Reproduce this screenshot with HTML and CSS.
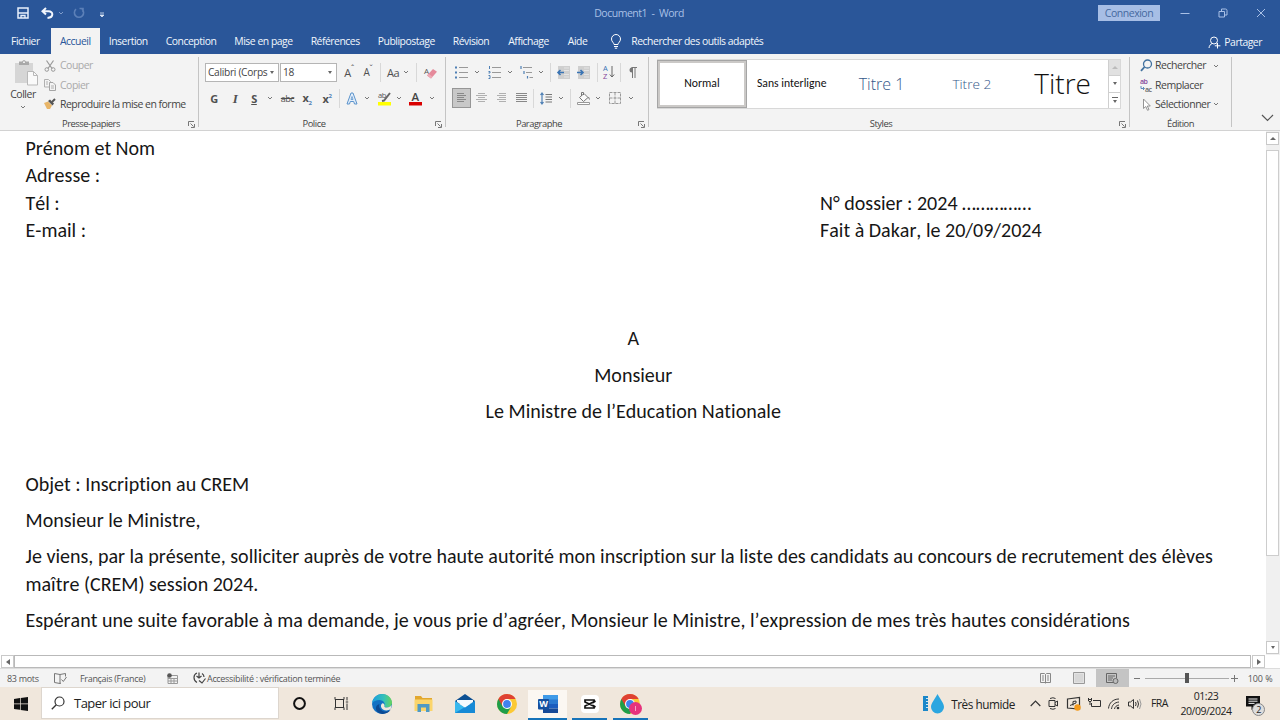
FILE: index.html
```
<!DOCTYPE html>
<html lang="fr">
<head>
  <meta charset="UTF-8">
  <meta name="viewport" content="width=device-width, initial-scale=1.0">
  <title>Document1 - Word</title>
  <link rel="stylesheet" href="styles.css">
</head>
<body>
  <svg class="defs" width="0" height="0">
    <symbol id="chev" viewBox="0 0 6 6"><path d="M1 2l2 2 2-2" fill="none" stroke="currentColor"/></symbol>
    <symbol id="launcher" viewBox="0 0 7 7"><path d="M.5 5V.5H6M2.500 2.500l3 3M6.500 3v3.500H3" fill="none" stroke="#777"/></symbol>
    <symbol id="chrome" viewBox="0 0 20 20">
      <circle cx="10" cy="10" r="10" fill="#fcc934"/>
      <path d="M10 10L1.340 5A10 10 0 0 0 10 20l4.300-7.500z" fill="#1e9e4a"/>
      <path d="M1.340 5A10 10 0 0 1 18.660 5H10L5.700 12.500z" fill="#df4132"/>
      <circle cx="10" cy="10" r="5" fill="#fff"/>
      <circle cx="10" cy="10" r="3.900" fill="#3f82ee"/>
    </symbol>
  </svg>

  <!-- Title bar -->
  <header class="titlebar">
    <div class="quick">
      <svg width="12" height="12" viewBox="0 0 12 12"><path d="M1 1h10v10H1z" fill="none" stroke="#e8f0fb" stroke-width="1.500"/><path d="M1 6h10M4 11V8.500h4V11" fill="none" stroke="#e8f0fb" stroke-width="1.300"/></svg>
      <svg width="13" height="12" viewBox="0 0 13 12"><path d="M5 1L1.500 4.300 5 7.600M2 4.300h5.500c5 0 5.500 6-1 6.700" fill="none" stroke="#f2f6fd" stroke-width="2"/></svg>
      <svg class="dim" width="6" height="6"><use href="#chev"/></svg>
      <svg class="dim" width="12" height="12" viewBox="0 0 12 12"><path d="M3 2.200A4.600 4.600 0 1 0 9 2.200M6.500 1.500H10V5" fill="none" stroke="#5c80b8" stroke-width="1.600"/></svg>
      <svg width="6" height="6" viewBox="0 0 6 6"><path d="M1 1h4M1 3h4L3 5z" fill="#dce6f5" stroke="#dce6f5" stroke-width=".8"/></svg>
    </div>
    <div class="doc-title">Document1 &nbsp;- &nbsp;Word</div>
    <div class="window-buttons">
      <button class="signin">Connexion</button>
      <svg width="10" height="10" viewBox="0 0 10 10"><path d="M.5 5.500h9" stroke="#a9c0e6"/></svg>
      <svg width="10" height="10" viewBox="0 0 10 10"><path d="M1 3.500h5.500v5.500H1zM3.500 3V1h4q1.500 0 1.500 1.500V7H7" fill="none" stroke="#a9c0e6"/></svg>
      <svg width="10" height="10" viewBox="0 0 10 10"><path d="M1 1l8 8M9 1L1 9" stroke="#a9c0e6"/></svg>
    </div>
  </header>

  <nav class="tabs">
    <a class="tab">Fichier</a>
    <a class="tab active">Accueil</a>
    <a class="tab">Insertion</a>
    <a class="tab">Conception</a>
    <a class="tab">Mise en page</a>
    <a class="tab">Références</a>
    <a class="tab">Publipostage</a>
    <a class="tab">Révision</a>
    <a class="tab">Affichage</a>
    <a class="tab">Aide</a>
    <a class="tell-me">
      <svg width="12" height="15" viewBox="0 0 12 15"><path d="M4 10.500C4 8.500 1.500 8 1.500 5a4.500 4.500 0 0 1 9 0c0 3-2.500 3.500-2.500 5.500zM4 12.500h4M4.800 14.200h2.400" fill="none" stroke="#fff"/></svg>
      Rechercher des outils adaptés
    </a>
    <a class="share">
      <svg width="13" height="13" viewBox="0 0 13 13"><circle cx="6" cy="4.500" r="3.500" fill="none" stroke="#fff"/><path d="M1 12c.3-2.500 1.500-3.800 3.300-4.500M7.500 7.500l1 .6M9.500 7v5.500M6.800 9.800h5.600" fill="none" stroke="#fff"/></svg>
      Partager
    </a>
  </nav>

  <!-- Ribbon -->
  <section class="ribbon">
    <div class="group clipboard">
      <div class="group-body">
        <div class="paste">
          <svg width="25" height="28" viewBox="0 0 25 28"><path d="M1 4h18v20H1z" fill="#d6d6d6"/><path d="M5 2.500h3Q10-.5 12 2.500h3V6H5z" fill="#a9a9a9"/><path d="M9 2.500h2v1.500H9z" fill="#eee"/><path d="M13.500 12.500h6l4 4v9.500h-10z" fill="#fafafa" stroke="#b9b9b9"/><path d="M19.500 12.500v4h4" fill="none" stroke="#b9b9b9"/></svg>
          <span>Coller</span>
          <svg width="6" height="6"><use href="#chev"/></svg>
        </div>
        <div class="commands">
          <div class="command disabled"><svg width="12" height="12" viewBox="0 0 12 12"><path d="M2.500.5l5.500 8M9.500.5L4 8.500" stroke="#999" stroke-width="1.200"/><circle cx="2.800" cy="9.500" r="1.800" fill="none" stroke="#999"/><circle cx="9.200" cy="9.500" r="1.800" fill="none" stroke="#999"/></svg>Couper</div>
          <div class="command disabled"><svg width="12" height="12" viewBox="0 0 12 12"><path d="M.5.500h4l2 2V8h-6z" fill="#f3f3f3" stroke="#b0b0b0"/><path d="M5.500 3.500H9l2.500 2.500v5.500h-6z" fill="#f3f3f3" stroke="#a5a5a5"/><path d="M7 7h3M7 9h3M2 3h2M2 5h2" stroke="#b0b0b0"/></svg>Copier</div>
          <div class="command"><svg width="12" height="12" viewBox="0 0 12 12"><path d="M0 5l4-1.500 4 4L6 11H3z" fill="#e8b568"/><path d="M4 3l2-1.500 4 4L8.500 7.500z" fill="#555"/><path d="M8 4l3-3" stroke="#555" stroke-width="2"/></svg>Reproduire la mise en forme</div>
        </div>
      </div>
      <div class="group-label"><span>Presse-papiers</span><svg width="7" height="7"><use href="#launcher"/></svg></div>
    </div>

    <div class="group font">
      <div class="group-body rows">
        <div class="row font-row1">
          <div class="combo">Calibri (Corps<i class="arrow"></i></div>
          <div class="combo">18<i class="arrow"></i></div>
          <span class="glyph">A<sup>ˆ</sup></span>
          <span class="glyph small">A<sup>ˇ</sup></span>
          <i class="sep"></i>
          <span class="glyph">Aa</span>
          <svg width="6" height="6"><use href="#chev"/></svg>
          <i class="sep"></i>
          <svg width="13" height="13" viewBox="0 0 13 13"><text class="svg-a" x="0" y="7.500">A</text><path d="M3 9.500L9 3l4 2.800L7 12.500z" fill="#e58a9b"/><path d="M3 9.500l1.600-1.700 4 3L7 12.500z" fill="#eda9b5"/></svg>
        </div>
        <div class="row font-row2">
          <b class="glyph">G</b>
          <b class="glyph italic">I</b>
          <b class="glyph underline">S</b>
          <svg width="6" height="6"><use href="#chev"/></svg>
          <span class="glyph strike">abc</span>
          <b class="glyph">x<sub>2</sub></b>
          <b class="glyph">x<sup class="two">2</sup></b>
          <i class="sep"></i>
          <svg width="12" height="13" viewBox="0 0 12 13"><path d="M1 12L5 1h2l4 11H8.500L7.700 9.500H4.300L3.500 12z" fill="#e3eefa" stroke="#5b93cc"/><path d="M5 7.500h2L6 4.500z" fill="#fff" stroke="#5b93cc" stroke-width=".8"/></svg>
          <svg width="6" height="6"><use href="#chev"/></svg>
          <svg width="15" height="15" viewBox="0 0 15 15"><text class="svg-ab" x="1" y="7">ab</text><path d="M13 2L7 9.500 5 10" fill="none" stroke="#666" stroke-width="2"/><path d="M1 11h13v3.500H1z" fill="#ff0"/></svg>
          <svg width="6" height="6"><use href="#chev"/></svg>
          <svg width="15" height="15" viewBox="0 0 15 15"><text class="svg-color" x="3.500" y="9.500">A</text><path d="M1 11h13v3.500H1z" fill="#d90000"/></svg>
          <svg width="6" height="6"><use href="#chev"/></svg>
        </div>
      </div>
      <div class="group-label"><span>Police</span><svg width="7" height="7"><use href="#launcher"/></svg></div>
    </div>

    <div class="group paragraph">
      <div class="group-body rows">
        <div class="row para-row1">
          <svg width="13" height="13" viewBox="0 0 13 13"><path d="M0 1.500h2M0 6.500h2M0 11.500h2" stroke="#4f80b5" stroke-width="2"/><path d="M4 1.500h9M4 6.500h9M4 11.500h9" stroke="#999"/></svg>
          <svg width="6" height="6"><use href="#chev"/></svg>
          <svg width="13" height="13" viewBox="0 0 13 13"><path d="M1.500 0v3M.500 5.500h1.500v1.500H.500M.500 9.500h1.500v3H.500" fill="none" stroke="#4f80b5"/><path d="M4 1.500h9M4 6.500h9M4 11.500h9" stroke="#999"/></svg>
          <svg width="6" height="6"><use href="#chev"/></svg>
          <svg width="13" height="13" viewBox="0 0 13 13"><path d="M1 0v3M4 5v3M7.500 10v2.500" stroke="#4f80b5" stroke-width="1.200"/><path d="M3 1.500h9M6 6.500h6M9.500 11.500H13" stroke="#999"/></svg>
          <svg width="6" height="6"><use href="#chev"/></svg>
          <i class="sep"></i>
          <svg width="13" height="13" viewBox="0 0 13 13"><path d="M1 0h12v13H1z" fill="#cfcfcf"/><path d="M7 2h5M7 4.500h5M7 8.500h5M7 11h5" stroke="#e4e4e4"/><path d="M7 6.500H1M3.500 4L1 6.500 3.500 9" fill="none" stroke="#3a74b4" stroke-width="1.600"/></svg>
          <svg width="13" height="13" viewBox="0 0 13 13"><path d="M1 0h12v13H1z" fill="#cfcfcf"/><path d="M7 2h5M7 4.500h5M7 8.500h5M7 11h5" stroke="#e4e4e4"/><path d="M0 6.500h6M3.500 4L6 6.500 3.500 9" fill="none" stroke="#3a74b4" stroke-width="1.600"/></svg>
          <i class="sep"></i>
          <svg width="12" height="14" viewBox="0 0 12 14"><text class="svg-sort blue" x="0" y="6">A</text><text class="svg-sort purple" x="0" y="13.500">Z</text><path d="M9 1v11M6.800 9.500l2.200 2.500 2.200-2.500" fill="none" stroke="#666"/></svg>
          <i class="sep"></i>
          <svg width="9" height="11" viewBox="0 0 9 11"><path d="M4 .5a2.500 2.500 0 0 0 0 5z" fill="#777"/><path d="M4.500 11V.5M7 11V.5M3.500.500H9" stroke="#777"/></svg>
        </div>
        <div class="row para-row2">
          <span class="pressed"><svg width="11" height="10" viewBox="0 0 11 10"><path d="M1 .5h7M1 2.500h9M1 4.500h7M1 6.500h9M1 8.500h7" stroke="#888"/></svg></span>
          <svg width="11" height="10" viewBox="0 0 11 10"><path d="M2 .5h7M0 2.500h11M2 4.500h7M0 6.500h11M2 8.500h7" stroke="#b0b0b0"/></svg>
          <svg width="11" height="10" viewBox="0 0 11 10"><path d="M3 .5h7M1 2.500h9M3 4.500h7M1 6.500h9M3 8.500h7" stroke="#b0b0b0"/></svg>
          <svg width="11" height="10" viewBox="0 0 11 10"><path d="M0 .5h11M0 2.500h11M0 4.500h11M0 6.500h11M0 8.500h11" stroke="#888"/></svg>
          <i class="sep"></i>
          <svg width="12" height="13" viewBox="0 0 12 13"><path d="M2 1v11M.5 3L2 1l1.500 2M.5 10L2 12l1.500-2" fill="none" stroke="#4f80b5" stroke-width="1.200"/><path d="M5.500 2.500H12M5.500 5H12M5.500 7.500H12M5.500 10H12" stroke="#777"/></svg>
          <svg width="6" height="6"><use href="#chev"/></svg>
          <i class="sep"></i>
          <svg width="14" height="13" viewBox="0 0 14 13"><path d="M2.500 5.500L7 1.500l4 4-4.500 4zM4.500 4V.5h2V3M11.500 5l1 2.500" fill="#fafafa" stroke="#777"/><path d="M.5 10.500h12v2H.5z" fill="#fff" stroke="#999"/></svg>
          <svg width="6" height="6"><use href="#chev"/></svg>
          <svg width="12" height="12" viewBox="0 0 12 12"><path d="M.5.500h11v11H.5zM6 .5v11M.5 6h11" fill="none" stroke="#999" stroke-dasharray="3 1"/></svg>
          <svg width="6" height="6"><use href="#chev"/></svg>
        </div>
      </div>
      <div class="group-label"><span>Paragraphe</span><svg width="7" height="7"><use href="#launcher"/></svg></div>
    </div>

    <div class="group styles">
      <div class="group-body">
        <div class="gallery">
          <div class="style selected">Normal</div>
          <div class="style">Sans interligne</div>
          <div class="style heading1">Titre 1</div>
          <div class="style heading2">Titre 2</div>
          <div class="style title">Titre</div>
          <div class="gallery-nav">
            <span class="off"><i class="arrow up"></i></span>
            <span><i class="arrow"></i></span>
            <span><i class="arrow more"></i></span>
          </div>
        </div>
      </div>
      <div class="group-label"><span>Styles</span><svg width="7" height="7"><use href="#launcher"/></svg></div>
    </div>

    <div class="group editing">
      <div class="group-body">
        <div class="commands">
          <div class="command"><svg width="13" height="13" viewBox="0 0 13 13"><circle cx="7.500" cy="5" r="4" fill="none" stroke="#41719f" stroke-width="1.300"/><path d="M4.500 8L1 11.800" stroke="#41719f" stroke-width="1.800"/></svg>Rechercher<svg class="drop" width="6" height="6"><use href="#chev"/></svg></div>
          <div class="command"><svg width="13" height="14" viewBox="0 0 13 14"><text class="svg-replace purple" x="0" y="5.500">ab</text><path d="M1 8v2.500h3M3 9l1.500 1.500L3 12" fill="none" stroke="#4f80b5" stroke-width=".9"/><text class="svg-replace" x="5" y="13.500">ac</text></svg>Remplacer</div>
          <div class="command"><svg width="13" height="13" viewBox="0 0 13 13"><path d="M3.500 1v9.500l2.300-2 1.700 3.800 1.500-.7-1.700-3.600h3z" fill="#fff" stroke="#888" stroke-width=".9"/></svg>Sélectionner<svg class="drop" width="6" height="6"><use href="#chev"/></svg></div>
        </div>
      </div>
      <div class="group-label"><span>Édition</span></div>
    </div>

    <div class="collapse">
      <svg width="13" height="8" viewBox="0 0 13 8"><path d="M1 1l5.500 5.500L12 1" fill="none" stroke="#555" stroke-width="1.200"/></svg>
    </div>
  </section>

  <!-- Document -->
  <main class="workspace">
    <article class="page">
      <div class="split"><span>Prénom et Nom</span></div>
      <div class="split"><span>Adresse :</span></div>
      <div class="split"><span>Tél :</span><span>N° dossier : 2024 ……………</span></div>
      <div class="split"><span>E-mail :</span><span>Fait à Dakar, le 20/09/2024</span></div>
      <div class="addressee">
        <p>A</p>
        <p>Monsieur</p>
        <p>Le Ministre de l’Education Nationale</p>
      </div>
      <p>Objet : Inscription au CREM</p>
      <p>Monsieur le Ministre,</p>
      <p>Je viens, par la présente, solliciter auprès de votre haute autorité mon inscription sur la liste des candidats au concours de recrutement des élèves<br>maître (CREM) session 2024.</p>
      <p>Espérant une suite favorable à ma demande, je vous prie d’agréer, Monsieur le Ministre, l’expression de mes très hautes considérations</p>
    </article>
    <div class="vscroll">
      <span class="scroll-btn"><i class="arrow up"></i></span>
      <span class="thumb"></span>
      <span class="scroll-btn"><i class="arrow"></i></span>
    </div>
  </main>
  <div class="hscroll">
    <span class="scroll-btn"><i class="arrow left"></i></span>
    <span class="thumb"></span>
    <span class="scroll-btn end"><i class="arrow right"></i></span>
  </div>

  <footer class="statusbar">
    <span class="words">83 mots</span>
    <svg class="proof" width="13" height="11" viewBox="0 0 13 11"><path d="M6 1.500v9M6 1.500L.5.500v9l5.500 1 1-.5M6 1.500L11.500.5v3M7.500 6.500l1.800 2L12.500 4" fill="none" stroke="#777"/></svg>
    <span class="lang">Français (France)</span>
    <svg class="macro" width="11" height="11" viewBox="0 0 11 11"><path d="M1 2.500h9.500v8H1zM1 5.500h9.500M4 5v5M7 5v5M1 8h9.500" fill="none" stroke="#999"/><circle cx="2.500" cy="2.500" r="2.300" fill="#555"/></svg>
    <svg class="access" width="13" height="12" viewBox="0 0 13 12"><path d="M4 1C0 2.500 0 8.500 4 10.500M6 .5v5M3.500 4L6 6l2.500-2M6 8.500l3 2.500 3.500-4.500M9 1.500c1.500 1 2 2 2 3.500" fill="none" stroke="#444" stroke-width="1.200"/></svg>
    <span>Accessibilité : vérification terminée</span>
    <div class="view">
      <svg width="11" height="11" viewBox="0 0 11 11"><path d="M5.500 1.500v9M.5.500h4l1 1 1-1h4v9H.5zM2 3h2M2 5h2M2 7h2M7 3h2M7 5h2M7 7h2" fill="none" stroke="#888"/></svg>
      <svg width="12" height="12" viewBox="0 0 12 12"><path d="M.5.500h11v11H.5z" fill="#e2e2e2" stroke="#999"/><path d="M2 3h8M2 5h8M2 7h8M2 9h8" stroke="#ccc"/></svg>
      <span class="current"><svg width="13" height="11" viewBox="0 0 13 11"><path d="M7 9.500H.5v-9h10V5M2 3h7M2 5h5M2 7h4" fill="none" stroke="#666"/><circle cx="9.500" cy="8" r="2.500" fill="#bbb" stroke="#666"/></svg></span>
    </div>
    <div class="zoom">
      <i class="minus"></i>
      <div class="slider"><i></i></div>
      <svg width="7" height="7" viewBox="0 0 7 7"><path d="M0 3.500h7M3.500 0v7" stroke="#777"/></svg>
      <span>100 %</span>
    </div>
  </footer>

  <!-- Windows taskbar -->
  <div class="taskbar">
    <div class="start"><svg width="14" height="14" viewBox="0 0 14 14"><path d="M0 2l6-.9v5.500H0zM6.700 1L14 0v6.600H6.700zM0 7.300h6v5.500L0 12zM6.700 7.300H14V14l-7.300-1z" fill="#111"/></svg></div>
    <div class="search">
      <svg width="14" height="14" viewBox="0 0 14 14"><circle cx="8.500" cy="5.500" r="4.500" fill="none" stroke="#333" stroke-width="1.200"/><path d="M5.300 8.700L.8 13.200" stroke="#333" stroke-width="1.300"/></svg>
      Taper ici pour
    </div>
    <div class="apps">
      <div class="app"><svg width="13" height="13" viewBox="0 0 13 13"><circle cx="6.500" cy="6.500" r="5.400" fill="none" stroke="#111" stroke-width="2"/></svg></div>
      <div class="app"><svg width="15" height="13" viewBox="0 0 15 13"><path d="M1 0v2.500h9V0M1 13v-2.500h9V13M1.500 3v7M9.500 3v7M13 0v3.500M13 6.500V13M11.800 5h2.400" fill="none" stroke="#333"/></svg></div>
      <div class="app"><svg width="20" height="20" viewBox="0 0 20 20">
        <defs>
          <linearGradient id="edgeTop" x1="0" x2="1"><stop offset="0" stop-color="#1b9de0"/><stop offset=".6" stop-color="#35c1b8"/><stop offset="1" stop-color="#66d45a"/></linearGradient>
        </defs>
        <circle cx="10" cy="10" r="10" fill="#1271c4"/>
        <path d="M0 9.500C.5 4 5 0 10 0c6 0 10 4.200 10 8.600 0 3-2.300 5-5 5-2.200 0-3.200-1-2.500-2.200C13.500 9 11 6 7.500 6 4 6 1 7.500 0 9.500z" fill="url(#edgeTop)"/>
        <path d="M7.500 10.200C6 13.500 9.500 18 14.500 17.500c1.800-.2 3.400-1 4.300-2-2 4-8.600 6-12.600 3C2.500 15.500 3.500 10.500 7.500 10.200z" fill="#0c4a94"/>
        <path d="M12.500 11.400c-.7 1.200.3 2.200 2.500 2.200 2 0 3.700-1 4.500-2.500-.2 1.500-.3 3-.9 4.200-3.600 2.200-9 1-9.600-2.600-.2-1.600.5-2.900 1.500-3.400 1.300.3 2 1.300 2 2.100z" fill="#f0e7dc"/>
      </svg></div>
      <div class="app"><svg width="19" height="18" viewBox="0 0 19 18"><path d="M1 1h6l1.500 2H18v4H1z" fill="#e2a72e"/><path d="M.5 4.500h18V16H.5z" fill="#fbd56b"/><path d="M3.500 17V9h12v8h-3.500v-4.500h-5V17z" fill="#4f9ac4"/></svg></div>
      <div class="app"><svg width="20" height="19" viewBox="0 0 20 19"><path d="M0 7l10-7 10 7v3H0z" fill="#0d4f91"/><path d="M0 7l10 6.500L20 7v12H0z" fill="#37b8ee"/><path d="M0 19L20 7v12z" fill="#168ad6"/><path d="M2 6h16v2l-8 5.500L2 8z" fill="#f3fafe"/></svg></div>
      <div class="app"><svg width="20" height="20"><use href="#chrome"/></svg></div>
      <div class="app open focused"><svg width="20" height="18" viewBox="0 0 20 18"><path d="M5 0h15v5H5z" fill="#3f9ae8"/><path d="M5 4.500h15V9H5z" fill="#2a79d0"/><path d="M5 9h15v4.500H5z" fill="#1b5cbe"/><path d="M5 13.500h15V18H5z" fill="#174a98"/><rect y="4" width="11" height="10.500" rx="1" fill="#15509f"/><text class="svg-word" x="1.200" y="12">W</text></svg></div>
      <div class="app open"><svg width="18" height="18" viewBox="0 0 18 18"><rect width="18" height="18" rx="4" fill="#fff"/><path d="M14.500 6L13 7V5H4v2l10.500 5M14.500 12L13 11v2H4v-2L14.500 6" fill="none" stroke="#111" stroke-width="1.700"/></svg></div>
      <div class="app open"><svg width="22" height="21" viewBox="0 0 22 21"><use href="#chrome" width="20" height="20"/><circle cx="15.500" cy="14.500" r="6.500" fill="#e6337c"/><path d="M15.500 12v5" stroke="#f5a4c6"/></svg></div>
    </div>
    <div class="tray">
      <svg class="weather" width="22" height="20" viewBox="0 0 22 20"><path d="M0 2h5v15H0z" fill="#1a87c9"/><path d="M3 4.500h2M3 7.500h2M3 10.500h2M3 13.500h2" stroke="#cde6f5"/><path d="M14.500 0C17 5 21 9 21 13a6.500 6.500 0 0 1-13 0c0-4 4-8 6.500-13z" fill="#2ba6e0"/></svg>
      <span class="weather-text">Très humide</span>
      <div class="tray-icons">
        <svg width="11" height="7" viewBox="0 0 11 7"><path d="M.7 6l4.800-4.800L10.300 6" fill="none" stroke="#333" stroke-width="1.200"/></svg>
        <svg width="11" height="13" viewBox="0 0 11 13"><path d="M1 3.500h6v6H1zM7 5.500l2.500-1.500v5L7 7.500M2 1.500q3-1.500 5.500 0M2 11.500q3 1.500 5.500 0" fill="none" stroke="#333"/></svg>
        <svg width="14" height="14" viewBox="0 0 14 14"><path d="M.5 2l12-1.500V12L.5 11z" fill="none" stroke="#333" stroke-width="1.200"/><path d="M3 8.500l6-2.500V4L6 4.500v4" fill="none" stroke="#333"/><circle cx="10.500" cy="10.500" r="3.200" fill="#f39a1c"/></svg>
        <svg width="13" height="11" viewBox="0 0 13 11"><path d="M5 2.500h7.500v6H3.500V5M0 1.500h4M.5 0v3q1.500 1.500 3 0V0M2 4v3" fill="none" stroke="#333"/></svg>
        <svg width="12" height="12" viewBox="0 0 12 12"><path d="M.5 10.500C1 5 5 1 11 1M3.500 11C4 7 6.500 4.500 11 4M6.500 11c.3-2 2-3.700 4.500-4" fill="none" stroke="#333"/><circle cx="10" cy="10" r="1.300" fill="#333"/></svg>
        <svg width="14" height="12" viewBox="0 0 14 12"><path d="M.5 4h2L5.500 1.500v9L2.500 8h-2zM7.500 4q1.300 2 0 4M9.500 2.500q2 3.500 0 7" fill="none" stroke="#333"/><path d="M11.500 1q3 5 0 10" fill="none" stroke="#999"/></svg>
      </div>
      <span class="kbd">FRA</span>
      <div class="clock"><span>01:23</span><span>20/09/2024</span></div>
      <div class="notif">
        <svg width="14" height="14" viewBox="0 0 14 14"><path d="M0 0h14v10.500H9L5.500 14v-3.500H0z" fill="#111"/><path d="M2.500 3h9M2.500 5.200h9M2.500 7.400h6" stroke="#eee"/></svg>
        <span class="count">2</span>
      </div>
    </div>
  </div>
</body>
</html>
```
FILE: styles.css
```
* {
  box-sizing: border-box;
}
body {
  margin: 0;
  width: 1280px;
  height: 720px;
  overflow: hidden;
  display: flex;
  flex-direction: column;
  background: #fff;
  color: #333;
  font-family: "Open Sans", "Noto Sans", sans-serif;
  font-size: 10.5px;
  letter-spacing: -0.045em;
  line-height: 1;
  white-space: nowrap;
}
svg {
  display: block;
  flex: none;
  overflow: visible;
}
.defs {
  position: absolute;
}
i {
  font-style: normal;
}
p {
  margin: 0;
}

/* title bar */
.titlebar {
  height: 28px;
  flex: none;
  display: grid;
  grid-template-columns: 500px 278px 502px;
  align-items: center;
  background: #2a5699;
  padding-bottom: 2px;
}
.quick {
  display: flex;
  align-items: center;
  padding-left: 17px;
}
.quick svg:nth-child(2) { margin-left: 12px; }
.quick svg:nth-child(3) { margin-left: 4px; }
.quick svg:nth-child(4) { margin-left: 9px; }
.quick svg:nth-child(5) { margin-left: 14px; margin-top: 3px; }
.dim {
  color: #7f9cca;
}
.doc-title {
  text-align: center;
  color: #a9c0e6;
}
.window-buttons {
  display: flex;
  align-items: center;
  justify-content: flex-end;
  gap: 28px;
  padding-right: 14px;
}
.signin {
  width: 62px;
  height: 16px;
  margin-right: -8px;
  padding: 0;
  border: 0;
  background: #a7bee5;
  color: #45699f;
  font: inherit;
  letter-spacing: inherit;
}

/* tabs */
.tabs {
  height: 26px;
  flex: none;
  display: flex;
  align-items: stretch;
  padding-left: 2px;
  background: #2a5699;
  color: #f2f6fc;
  font-size: 10.4px;
}
.tab {
  padding: 0 9px;
  line-height: 26px;
}
.tab.active {
  width: 49px;
  margin-left: 2px;
  padding: 0;
  text-align: center;
  background: #f3f3f3;
  color: #2a5699;
}
.tab:nth-child(n+9) {
  padding-left: 10px;
}
.tell-me,
.share {
  display: flex;
  align-items: center;
}
.tell-me {
  gap: 9px;
  margin-left: 14px;
}
.share {
  gap: 3px;
  margin-left: auto;
  margin-right: 18px;
  padding-top: 2px;
}

/* ribbon */
.ribbon {
  height: 77px;
  flex: none;
  display: flex;
  background: #f3f3f3;
  border-bottom: 1px solid #d2d2d2;
  color: #444;
}
.ribbon svg {
  color: #777;
}
.group {
  display: flex;
  flex-direction: column;
  border-right: 1px solid #c4c4c4;
  height: 70px;
  margin-top: 3px;
}
.group-body {
  height: 60px;
  flex: none;
  display: flex;
}
.group-label {
  height: 14px;
  flex: none;
  display: flex;
  align-items: center;
  justify-content: center;
  font-size: 9.4px;
}
.group-label span {
  flex: 1;
  text-align: center;
}
.group-label svg {
  margin-right: 3px;
}
.clipboard { width: 199px; }
.clipboard .group-label span { padding-right: 6px; }
.font { width: 247px; }
.font .group-label span { padding-right: 6px; }
.paragraph { width: 203px; }
.paragraph .group-label span { padding-right: 6px; }
.styles { width: 481px; }
.styles .group-label span { padding-right: 6px; }
.editing { width: 102px; }

.paste {
  width: 46px;
  display: flex;
  flex-direction: column;
  align-items: center;
  padding-top: 2px;
}
.paste svg:first-child {
  margin-left: 6px;
}
.paste span {
  margin: 2px 0 4px;
}
.commands {
  display: flex;
  flex-direction: column;
  flex: 1;
  margin-top: -1px;
}
.command {
  height: 19.4px;
  display: flex;
  align-items: center;
}
.clipboard .command svg {
  margin: 0 4px 0 -2px;
}
.clipboard .command {
  letter-spacing: -0.05em;
}
.disabled {
  color: #aaa;
}
.editing .commands {
  padding-left: 10px;
}
.editing .command svg:first-child {
  margin-right: 2px;
}
.editing .command .drop {
  margin-left: auto;
  margin-right: 12px;
}

.rows {
  flex-direction: column;
  gap: 6px;
  padding-top: 5px;
}
.row {
  height: 20px;
  display: grid;
  align-items: center;
  justify-items: center;
  padding-left: 6px;
}
.font-row1 { grid-template-columns: 75px 57px 24px 14px 11px 14px 12px 9px 18px; }
.font-row2 { grid-template-columns: 18px 24px 14px 18px 17px 22px 18px 7px 18px 11px 24px 6px 27px 6px; }
.para-row1 { grid-template-columns: 18px 13px 22px 10px 23px 6px 13px 13px 26px 2px 21px 3px 20px; }
.para-row2 { grid-template-columns: 19px 21px 19px 21px 3px 22px 7px 13px 13px 16px 18px 14px; }
.combo {
  width: 100%;
  height: 19px;
  display: flex;
  align-items: center;
  justify-content: space-between;
  padding: 0 4px 0 2px;
  border: 1px solid #b5b5b5;
  background: #fff;
  font-size: 10.2px;
  letter-spacing: -0.03em;
}
.combo:first-child {
  width: 74px;
  justify-self: start;
}
.arrow {
  width: 0;
  height: 0;
  border: 2.5px solid transparent;
  border-top: 3px solid #666;
  border-bottom: 0;
}
.arrow.up {
  border: 3px solid transparent;
  border-bottom: 3px solid #666;
  border-top: 0;
}
.arrow.left {
  border: 3px solid transparent;
  border-right: 4px solid #666;
  border-left: 0;
}
.arrow.right {
  border: 3px solid transparent;
  border-left: 4px solid #666;
  border-right: 0;
}
.sep {
  width: 1px;
  height: 19px;
  background: #d8d8d8;
}
.glyph {
  color: #505050;
  font-size: 11px;
}
.glyph.small {
  font-size: 10px;
}
.glyph sup,
.glyph sub {
  font-size: 9px;
  line-height: 0;
}
.glyph .two,
.glyph sub {
  font-size: 6px;
  color: #4f80b5;
}
.glyph.italic {
  font-family: "Liberation Serif", serif;
  font-style: italic;
  font-size: 13px;
}
.glyph.underline {
  text-decoration: underline;
}
.glyph.strike {
  font-size: 9px;
  text-decoration: line-through;
}
.pressed {
  width: 19px;
  height: 20px;
  display: flex;
  align-items: center;
  justify-content: center;
  background: #c8c8c8;
  border: 1px solid #969696;
}
.svg-a {
  font-size: 8px;
  fill: #555;
}
.svg-sort {
  font-size: 7.5px;
}
.svg-ab {
  font-size: 7.5px;
  fill: #555;
}
.svg-replace {
  font-size: 7px;
  font-weight: 600;
  fill: #666;
}
.svg-color {
  font-size: 11.5px;
  font-weight: 600;
  fill: #444;
}
.blue { fill: #3a74b4; }
.purple { fill: #84459a; }

/* style gallery */
.gallery {
  width: 464px;
  height: 50px;
  margin: 2px 0 0 8px;
  display: flex;
  border: 1px solid #d8d8d8;
  background: #fff;
}
.style {
  width: 90px;
  display: flex;
  align-items: center;
  justify-content: center;
  color: #111;
  font-family: Calibri, Carlito, Lato, sans-serif;
  font-size: 11.7px;
  letter-spacing: 0;
  font-variant-ligatures: none;
}
.style.selected {
  margin-left: -1px;
  border: 3px solid #cbc9c7;
  outline: 1px solid #a5a5a5;
  outline-offset: -1px;
}
.style.heading1,
.style.heading2,
.style.title {
  font-family: "Open Sans", sans-serif;
  font-weight: 300;
  color: #34588a;
}
.style.heading1 { font-size: 16px; }
.style.heading2 { font-size: 13.6px; padding-left: 1px; }
.style.title {
  font-size: 28px;
  width: 92px;
  padding: 0 0 2px 1px;
  color: #111;
}
.gallery-nav {
  width: 12px;
  margin-left: auto;
  display: flex;
  flex-direction: column;
  border-left: 1px solid #cfcfcf;
}
.gallery-nav span {
  flex: 1;
  display: flex;
  align-items: center;
  justify-content: center;
}
.gallery-nav span + span {
  border-top: 1px solid #cfcfcf;
}
.gallery-nav .off {
  background: #e1e1e1;
}
.gallery-nav .off .arrow {
  border-bottom-color: #bbb;
}
.gallery-nav .more {
  position: relative;
  top: 1px;
}
.gallery-nav .more::before {
  content: "";
  position: absolute;
  left: -3px;
  top: -6px;
  width: 6px;
  height: 1px;
  background: #666;
}
.collapse {
  margin: 60px 0 0 29px;
}

/* document */
.workspace {
  height: 524px;
  flex: none;
  display: flex;
}
.page {
  width: 1266px;
  padding: 4px 25px 0 25.5px;
  color: #161616;
  font-family: Calibri, Carlito, Lato, sans-serif;
  font-size: 20.05px;
  line-height: 27.3px;
  letter-spacing: 0;
  font-kerning: none;
  font-variant-ligatures: none;
}
.split {
  display: grid;
  grid-template-columns: 794.5px 1fr;
}
.addressee {
  margin: 81.3px 0 45.4px;
  text-align: center;
}
.page p {
  margin-bottom: 9px;
}
.vscroll {
  width: 14px;
  display: flex;
  flex-direction: column;
  align-items: stretch;
  background: #f0f0f0;
  padding: 1px 1px 0 0;
}
.scroll-btn {
  width: 13px;
  height: 13px;
  flex: none;
  display: flex;
  align-items: center;
  justify-content: center;
  background: #fff;
  border: 1px solid #c9c9c9;
}
.vscroll .thumb {
  height: 406px;
  margin: 5px 0 85px;
  background: #fff;
  border: 1px solid #cdcdcd;
}
.hscroll {
  height: 13px;
  flex: none;
  display: flex;
  padding-left: 1px;
}
.hscroll .thumb {
  width: 1237px;
  background: #fff;
  border: 1px solid #b9b9b9;
}
.scroll-btn.end {
  margin-left: 1px;
}

/* status bar */
.statusbar {
  height: 19px;
  flex: none;
  display: flex;
  align-items: center;
  background: #f3f3f3;
  border-top: 1px solid #dcdcdc;
  color: #555;
  font-size: 9px;
  letter-spacing: -0.035em;
}
.words { width: 47px; margin-left: 7px; }
.lang { width: 87px; margin-left: 13px; }
.access { margin: 0 1px 0 15px; }
.view {
  display: flex;
  align-items: center;
  margin-left: auto;
}
.view svg:nth-child(2) {
  margin: 0 11px 0 22px;
}
.current {
  width: 33px;
  height: 18px;
  display: flex;
  align-items: center;
  justify-content: center;
  background: #c4c4c4;
}
.zoom {
  display: flex;
  align-items: center;
  margin-right: 7.5px;
}
.minus {
  width: 6px;
  height: 1px;
  margin: 0 5px;
  background: #777;
}
.slider {
  width: 84px;
  height: 10px;
  margin-right: 2px;
  display: flex;
  justify-content: center;
  background: linear-gradient(#aaa, #aaa) center / 100% 1px no-repeat;
}
.slider i {
  width: 4px;
  background: #555;
}
.zoom span {
  margin-left: 10px;
  letter-spacing: -0.01em;
}

/* taskbar */
.taskbar {
  height: 33px;
  flex: none;
  display: flex;
  background: #f0e7dc;
  color: #222;
}
.start {
  width: 41px;
  display: flex;
  align-items: center;
  justify-content: center;
}
.search {
  width: 238px;
  height: 32px;
  display: flex;
  align-items: center;
  gap: 9px;
  padding-left: 9px;
  background: #fff;
  border: 1px solid #ddd6ce;
  font-size: 13px;
  letter-spacing: -0.04em;
}
.apps {
  display: flex;
}
.app {
  width: 41.4px;
  display: flex;
  align-items: center;
  justify-content: center;
}
.app.open {
  width: 35px;
  margin: 3px 3px 0;
  border-bottom: 2px solid #1673b9;
}
.app.focused {
  width: 39px;
  margin: 3px 2px 0 1px;
  background: #fbf7f2;
}
.svg-word {
  font-size: 9px;
  font-weight: 700;
  fill: #fff;
}
.tray {
  margin-left: auto;
  display: flex;
  align-items: center;
}
.weather-text {
  margin: 2px 15px 0 6px;
  font-size: 11.8px;
}
.tray-icons {
  width: 112px;
  display: flex;
  align-items: center;
  justify-content: space-between;
}
.kbd {
  margin: 0 12px 0 9px;
}
.clock {
  width: 52px;
  display: flex;
  flex-direction: column;
  align-items: center;
  gap: 5px;
}
.notif {
  position: relative;
  width: 20px;
  height: 20px;
  margin: 0 14px 0 14px;
}
.notif svg {
  margin-top: 2px;
}
.count {
  position: absolute;
  left: 6px;
  top: 9px;
  width: 13px;
  height: 13px;
  border: 1px solid #888;
  border-radius: 50%;
  background: #ddd;
  font-size: 9px;
  line-height: 11px;
  text-align: center;
}
```
